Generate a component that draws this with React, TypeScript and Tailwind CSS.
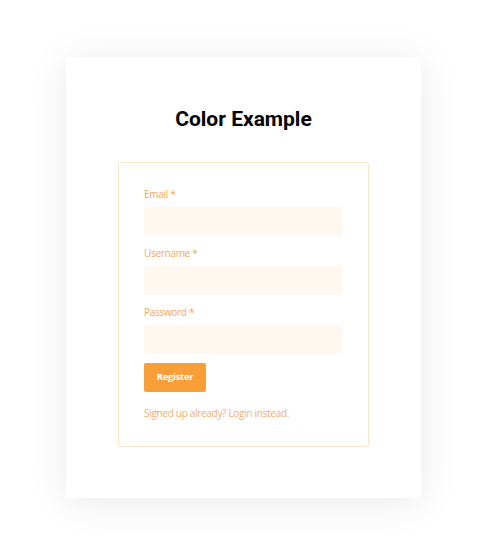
export default function App() {
  const fields = ["Email", "Username", "Password"];
  return (
    <div className="w-full h-[550px] bg-white pt-[57px]">
      <div className="ml-[66px] w-[355px] rounded-[3px] bg-white pt-[48px] pb-[51px] shadow-[0_4px_40px_rgba(0,0,0,0.09)]">
        <h1 className="text-center font-['Roboto',sans-serif] text-[21px] font-bold leading-[28px] text-black">
          Color Example
        </h1>
        <div className="mx-auto mt-[29px] w-[251px] rounded-[3px] border border-[#fde5c8] px-[25px] pt-[24px] pb-[25px] font-['Open_Sans',sans-serif]">
          {fields.map((f, i) => (
            <div key={f} className={i === 0 ? "" : "mt-[10px]"}>
              <label className="block text-[10px] leading-[15px] tracking-[-0.3px] text-[#f6a560]">
                {f} *
              </label>
              <div className="mt-[5px] h-[29px] w-full rounded-[3px] bg-[#fff8f1]" />
            </div>
          ))}
          <button className="mt-[9px] h-[29px] w-[62px] rounded-[2px] bg-[#f99f38] text-[9.5px] font-bold tracking-[-0.3px] text-white">
            Register
          </button>
          <p className="mt-[14px] text-[10px] leading-[15px] tracking-[-0.3px] text-[#f6ab6c]">
            Signed up already? Login instead.
          </p>
        </div>
      </div>
    </div>
  );
}
